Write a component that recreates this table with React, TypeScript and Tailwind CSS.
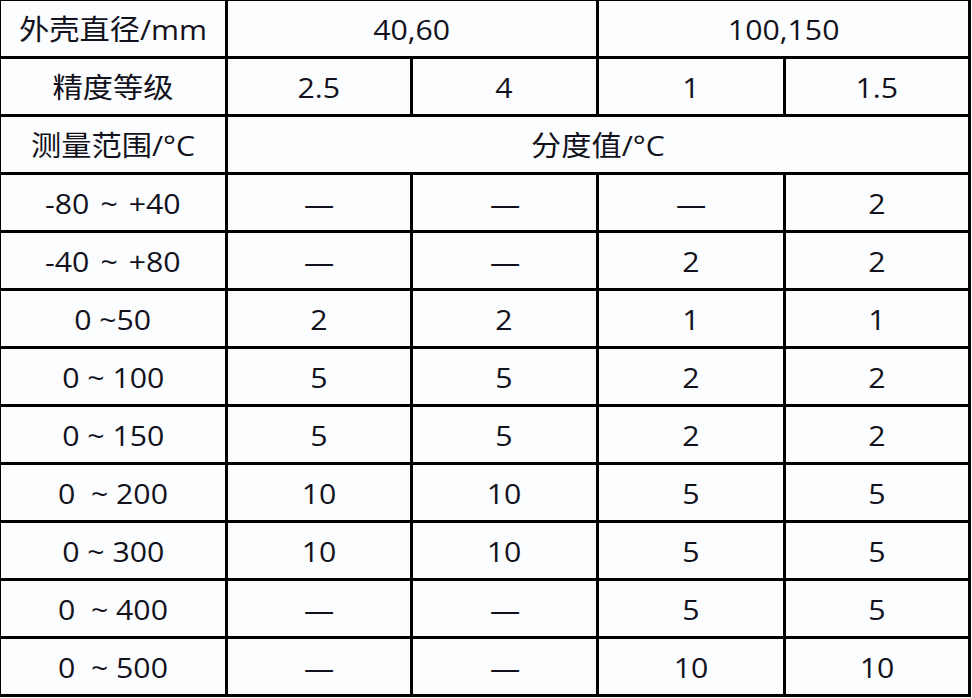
import React from "react";

const rows: string[][] = [
  ["-80 ~ +40", "—", "—", "—", "2"],
  ["-40 ~ +80", "—", "—", "2", "2"],
  ["0 ~50", "2", "2", "1", "1"],
  ["0 ~ 100", "5", "5", "2", "2"],
  ["0 ~ 150", "5", "5", "2", "2"],
  ["0  ~ 200", "10", "10", "5", "5"],
  ["0 ~ 300", "10", "10", "5", "5"],
  ["0  ~ 400", "—", "—", "5", "5"],
  ["0  ~ 500", "—", "—", "10", "10"],
];

function Cell({ children, span }: { children: React.ReactNode; span?: string }) {
  return (
    <div
      className={`bg-[#fcfdfe] flex items-center justify-center whitespace-pre text-[28px] leading-none text-[#12121c] ${span ?? ""}`}
    >
      <span className="inline-block scale-x-[1.08]">{children}</span>
    </div>
  );
}

function RangeText({ text, wide }: { text: string; wide: boolean }) {
  if (!wide) return <>{text}</>;
  const [a, b] = text.split(" ~ ");
  return (
    <>
      {a} <span className="px-[3px]">~</span> {b}
    </>
  );
}

export default function App() {
  return (
    <div
      className="w-[972px] h-[698px] bg-white"
      style={{ fontFamily: "'Open Sans', 'Noto Sans CJK SC', sans-serif" }}
    >
      <div className="w-[971px] h-[697px] bg-black pl-[1px] pt-[1px] pr-[3px] pb-[3px]">
        <div className="grid h-full grid-cols-[224px_182px_183px_184px_182px] grid-rows-[repeat(12,55px)] gap-[3px]">
          <Cell>外壳直径/mm</Cell>
          <Cell span="col-span-2">40,60</Cell>
          <Cell span="col-span-2">100,150</Cell>

          <Cell>精度等级</Cell>
          <Cell>2.5</Cell>
          <Cell>4</Cell>
          <Cell>1</Cell>
          <Cell>1.5</Cell>

          <Cell>测量范围/°C</Cell>
          <Cell span="col-span-4">分度值/°C</Cell>

          {rows.map((r, i) => (
            <React.Fragment key={i}>
              {r.map((c, j) => (
                <Cell key={j}>
                  {j === 0 ? <RangeText text={c} wide={i < 2} /> : c}
                </Cell>
              ))}
            </React.Fragment>
          ))}
        </div>
      </div>
    </div>
  );
}
